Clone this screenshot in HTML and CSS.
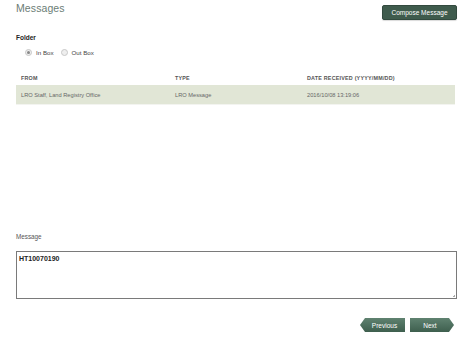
FILE: index.html
```html
<!DOCTYPE html>
<html>
<head>
    <title>Messages</title>
    <link rel="stylesheet" href="styles.css">
</head>
<body>
    <div class="header">
        <h1>Messages</h1>
        <button class="compose-button">Compose Message</button>
    </div>

    <div class="folder">
        <div class="folder-label">Folder</div>
        <div class="folder-options">
            <label class="radio"><span class="dot checked"></span>In Box</label>
            <label class="radio"><span class="dot"></span>Out Box</label>
        </div>
    </div>

    <div class="messages">
        <div class="row head">
            <div>FROM</div>
            <div>TYPE</div>
            <div>DATE RECEIVED (YYYY/MM/DD)</div>
        </div>
        <div class="row selected">
            <div>LRO Staff, Land Registry Office</div>
            <div>LRO Message</div>
            <div>2016/10/08 13:19:06</div>
        </div>
    </div>

    <div class="message-label">Message</div>
    <div class="message-box">
        <div class="message-text">HT10070190</div>
        <span class="grip"></span>
    </div>

    <div class="pager">
        <button class="nav-button prev">Previous</button>
        <button class="nav-button next">Next</button>
    </div>
</body>
</html>
```

FILE: styles.css
```css
body {
    font-family: 'Liberation Sans', Arial, sans-serif;
    margin: 0;
    padding: 0 17px 0 16px;
    background: #fff;
    color: #555;
}

.header {
    display: flex;
    justify-content: space-between;
    align-items: flex-start;
    height: 26px;
}

.header h1 {
    margin: 2px 0 0;
    font-size: 10.5px;
    font-weight: normal;
    color: #6b7d76;
    letter-spacing: 0.1px;
}

.compose-button {
    margin-top: 5px;
    width: 75px;
    height: 15px;
    padding: 0;
    background: #3f5b4d;
    border: 1px solid #334a3f;
    border-radius: 2px;
    color: #fff;
    font-family: 'Liberation Sans', Arial, sans-serif;
    font-size: 6.5px;
    box-shadow: 0 1px 1px rgba(0, 0, 0, 0.15);
}

.folder-label {
    margin-top: 8px;
    font-size: 6.5px;
    font-weight: bold;
    color: #222;
}

.folder-options {
    display: flex;
    gap: 7px;
    margin: 8px 0 0 9px;
}

.radio {
    display: flex;
    align-items: center;
    gap: 4px;
    font-size: 6.2px;
    color: #444;
}

.dot {
    width: 5px;
    height: 5px;
    border: 1px solid #c8c8c8;
    border-radius: 50%;
    background: #eee;
    position: relative;
}

.dot.checked::after {
    content: "";
    position: absolute;
    left: 1px;
    top: 1px;
    width: 3px;
    height: 3px;
    border-radius: 50%;
    background: #888;
}

.messages {
    margin-top: 14px;
    width: 439px;
}

.row {
    display: grid;
    grid-template-columns: 154px 132px 1fr;
    padding-left: 5px;
    align-items: center;
}

.row.head {
    height: 15px;
    font-size: 5.4px;
    font-weight: bold;
    color: #555;
    letter-spacing: 0.2px;
}

.row.selected {
    height: 19px;
    background: #e1e6d6;
    font-size: 5.7px;
    color: #666;
    border-bottom: 1px solid #f3f4f0;
}

.message-label {
    margin-top: 128px;
    font-size: 6.3px;
    color: #555;
}

.message-box {
    position: relative;
    box-sizing: border-box;
    margin-top: 11px;
    height: 48px;
    border: 1px solid #7a7a7a;
    padding: 2px 2px;
    font-size: 7px;
}

.message-text {
    font-weight: bold;
    color: #222;
    line-height: 9px;
}

.grip {
    position: absolute;
    right: 1px;
    bottom: 1px;
    width: 3px;
    height: 3px;
    background: linear-gradient(135deg, transparent 50%, #aaa 50%);
}

.pager {
    display: flex;
    justify-content: flex-end;
    gap: 5px;
    margin-top: 19px;
    padding-right: 3px;
}

.nav-button {
    height: 14px;
    padding: 0;
    border: none;
    color: #fff;
    font-family: 'Liberation Sans', Arial, sans-serif;
    font-size: 6.5px;
    background: linear-gradient(#5f8270, #3e5f4e);
}

.nav-button.prev {
    width: 45px;
    padding-left: 4px;
    clip-path: polygon(5px 0, 100% 0, 100% 100%, 5px 100%, 0 50%);
}

.nav-button.next {
    width: 44px;
    padding-right: 4px;
    clip-path: polygon(0 0, calc(100% - 5px) 0, 100% 50%, calc(100% - 5px) 100%, 0 100%);
}
```
